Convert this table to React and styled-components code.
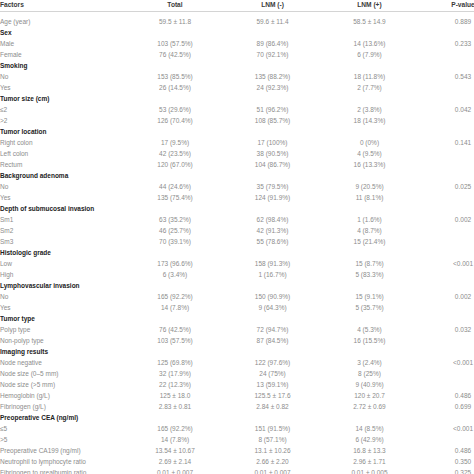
import React from 'react';
import styled, { createGlobalStyle } from 'styled-components';

const GlobalStyle = createGlobalStyle`
  html, body {
    margin: 0;
    padding: 0;
    background: #ffffff;
    overflow: hidden;
  }
  body {
    font-family: "Liberation Sans", Arial, sans-serif;
  }
`;

const rows = [
  { label: 'Age (year)', v: ['59.5 ± 11.8', '59.6 ± 11.4', '58.5 ± 14.9', '0.889'] },
  { group: 'Sex' },
  { label: 'Male', v: ['103 (57.5%)', '89 (86.4%)', '14 (13.6%)', '0.233'] },
  { label: 'Female', v: ['76 (42.5%)', '70 (92.1%)', '6 (7.9%)', ''] },
  { group: 'Smoking' },
  { label: 'No', v: ['153 (85.5%)', '135 (88.2%)', '18 (11.8%)', '0.543'] },
  { label: 'Yes', v: ['26 (14.5%)', '24 (92.3%)', '2 (7.7%)', ''] },
  { group: 'Tumor size (cm)' },
  { label: '≤2', v: ['53 (29.6%)', '51 (96.2%)', '2 (3.8%)', '0.042'] },
  { label: '>2', v: ['126 (70.4%)', '108 (85.7%)', '18 (14.3%)', ''] },
  { group: 'Tumor location' },
  { label: 'Right colon', v: ['17 (9.5%)', '17 (100%)', '0 (0%)', '0.141'] },
  { label: 'Left colon', v: ['42 (23.5%)', '38 (90.5%)', '4 (9.5%)', ''] },
  { label: 'Rectum', v: ['120 (67.0%)', '104 (86.7%)', '16 (13.3%)', ''] },
  { group: 'Background adenoma' },
  { label: 'No', v: ['44 (24.6%)', '35 (79.5%)', '9 (20.5%)', '0.025'] },
  { label: 'Yes', v: ['135 (75.4%)', '124 (91.9%)', '11 (8.1%)', ''] },
  { group: 'Depth of submucosal invasion' },
  { label: 'Sm1', v: ['63 (35.2%)', '62 (98.4%)', '1 (1.6%)', '0.002'] },
  { label: 'Sm2', v: ['46 (25.7%)', '42 (91.3%)', '4 (8.7%)', ''] },
  { label: 'Sm3', v: ['70 (39.1%)', '55 (78.6%)', '15 (21.4%)', ''] },
  { group: 'Histologic grade' },
  { label: 'Low', v: ['173 (96.6%)', '158 (91.3%)', '15 (8.7%)', '<0.001'] },
  { label: 'High', v: ['6 (3.4%)', '1 (16.7%)', '5 (83.3%)', ''] },
  { group: 'Lymphovascular invasion' },
  { label: 'No', v: ['165 (92.2%)', '150 (90.9%)', '15 (9.1%)', '0.002'] },
  { label: 'Yes', v: ['14 (7.8%)', '9 (64.3%)', '5 (35.7%)', ''] },
  { group: 'Tumor type' },
  { label: 'Polyp type', v: ['76 (42.5%)', '72 (94.7%)', '4 (5.3%)', '0.032'] },
  { label: 'Non-polyp type', v: ['103 (57.5%)', '87 (84.5%)', '16 (15.5%)', ''] },
  { group: 'Imaging results' },
  { label: 'Node negative', v: ['125 (69.8%)', '122 (97.6%)', '3 (2.4%)', '<0.001'] },
  { label: 'Node size (0–5 mm)', v: ['32 (17.9%)', '24 (75%)', '8 (25%)', ''] },
  { label: 'Node size (>5 mm)', v: ['22 (12.3%)', '13 (59.1%)', '9 (40.9%)', ''] },
  { label: 'Hemoglobin (g/L)', v: ['125 ± 18.0', '125.5 ± 17.6', '120 ± 20.7', '0.486'] },
  { label: 'Fibrinogen (g/L)', v: ['2.83 ± 0.81', '2.84 ± 0.82', '2.72 ± 0.69', '0.699'] },
  { group: 'Preoperative CEA (ng/ml)' },
  { label: '≤5', v: ['165 (92.2%)', '151 (91.5%)', '14 (8.5%)', '<0.001'] },
  { label: '>5', v: ['14 (7.8%)', '8 (57.1%)', '6 (42.9%)', ''] },
  { label: 'Preoperative CA199 (ng/ml)', v: ['13.54 ± 10.67', '13.1 ± 10.26', '16.8 ± 13.3', '0.486'] },
  { label: 'Neutrophil to lymphocyte ratio', v: ['2.69 ± 2.14', '2.66 ± 2.20', '2.96 ± 1.71', '0.350'] },
  { label: 'Fibrinogen to prealbumin ratio', v: ['0.01 ± 0.007', '0.01 ± 0.007', '0.01 ± 0.005', '0.325'] },
];

export default function App() {
  return (
    <>
      <GlobalStyle />
      <Table>
        <HeadRow>
          <Cell $first>Factors</Cell>
          <Cell>Total</Cell>
          <Cell>LNM (-)</Cell>
          <Cell>LNM (+)</Cell>
          <Cell>P-value</Cell>
        </HeadRow>
        <Body>
          {rows.map((r, i) =>
            r.group ? (
              <Row key={i}>
                <Cell $first $group>{r.group}</Cell>
              </Row>
            ) : (
              <Row key={i}>
                <Cell $first>{r.label}</Cell>
                {r.v.map((x, j) => (
                  <Cell key={j}>{x}</Cell>
                ))}
              </Row>
            )
          )}
        </Body>
      </Table>
    </>
  );
}

const Table = styled.div`
  margin-top: -3px;
  width: 510px;
`;

const cols = `126px 98px 97px 97px 90px`;

const HeadRow = styled.div`
  display: grid;
  grid-template-columns: ${cols};
  align-items: center;
  height: 14px;
  border-bottom: 1px solid #d4d4d4;
  color: #3a3a3a;
  font-size: 6.6px;
  font-weight: 700;
`;

const Body = styled.div`
  padding-top: 4px;
`;

const Row = styled.div`
  display: grid;
  grid-template-columns: ${cols};
  align-items: center;
  height: 11px;
  color: #8c8c8c;
  font-size: 6.5px;
`;

const Cell = styled.div`
  white-space: nowrap;
  text-align: ${(p) => (p.$first ? 'left' : 'center')};
  grid-column: ${(p) => (p.$group ? '1 / -1' : 'auto')};
  font-weight: ${(p) => (p.$group ? 700 : 'inherit')};
  color: ${(p) => (p.$group ? '#222' : 'inherit')};
`;
